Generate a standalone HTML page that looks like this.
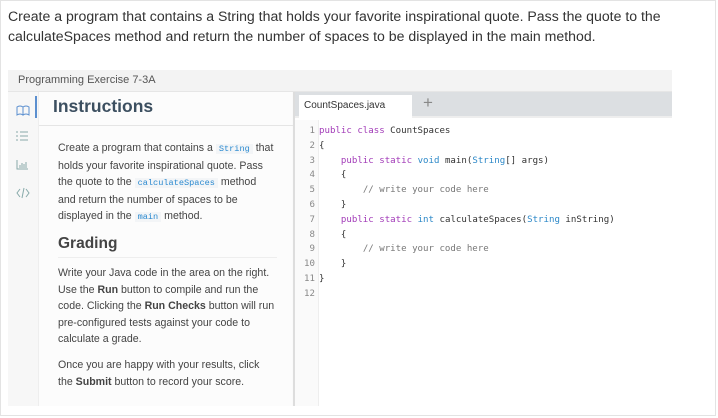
<!DOCTYPE html>
<html><head><style>
*{margin:0;padding:0;box-sizing:border-box}
body{width:718px;height:418px;background:#fff;font-family:"Liberation Sans",sans-serif;position:relative;overflow:hidden}
.frame{position:absolute;left:0;top:0;width:716px;height:416px;border:1px solid #e3e3e3}
.q{position:absolute;left:8px;top:6px;width:705px;font-size:14.1px;line-height:20px;color:#333}
.shot{position:absolute;left:8px;top:70px;width:664px;height:336px;background:#fafafa}
.hdr{position:absolute;left:0;top:0;width:664px;height:22px;background:#f3f3f3;font-size:11px;color:#555;padding:4px 0 0 10px;border-bottom:1px solid #e6e6e6}
.icons{position:absolute;left:0;top:22px;width:30px;height:314px;background:#f7f7f7}
.ins{position:absolute;left:30px;top:22px;width:254px;height:314px;background:#fcfcfc;border-left:1px solid #eee}
.ins h1{position:absolute;left:14px;top:4px;font-size:17.5px;color:#3c4f60;font-weight:bold}
.ins .ln{position:absolute;left:0;top:33px;width:254px;border-top:1px solid #e5e5e5}
.bar{position:absolute;left:-4px;top:4px;width:2px;height:22px;background:#5b8fcf}
.p{position:absolute;left:19px;font-size:10.6px;line-height:16.5px;color:#444;white-space:nowrap}
code{font-family:"Liberation Mono",monospace;font-size:8.6px;color:#2b8ad0;background:#f3f5f7;padding:0 3px}
.ins h2{position:absolute;left:19px;top:143px;font-size:15.5px;color:#444;font-weight:bold}
.ed{position:absolute;left:285px;top:22px;width:379px;height:314px;background:#fff;border-left:2px solid #ddd}
.tabs{position:absolute;left:0;top:0;width:377px;height:26px;background:#dcdfe2;border-bottom:2px solid #eee}
.tab{position:absolute;left:4px;top:3px;width:113px;height:23px;background:#fff;font-size:10px;color:#333;padding:5px 0 0 5px}
.plus{position:absolute;left:128px;top:1px;font-size:17px;color:#888}
.gut{position:absolute;left:0;top:28px;width:24px;height:286px;background:#fafafa;border-right:1px solid #eee}
.code{position:absolute;left:0;top:32px;font-family:"DejaVu Sans Mono","Liberation Mono",monospace;font-size:9.1px;line-height:14.8px;color:#333;white-space:pre}
.n{display:inline-block;width:20px;text-align:right;color:#888;margin-right:4px}
.k{color:#a23bb8}.t{color:#2c88c8}.c{color:#777}
</style></head><body>
<div class="frame"></div>
<div class="q">Create a program that contains a String that holds your favorite inspirational quote. Pass the quote to the calculateSpaces method and return the number of spaces to be displayed in the main method.</div>
<div class="shot">
<div class="hdr">Programming Exercise 7-3A</div>
<div class="icons">
<svg width="30" height="120" style="position:absolute;left:0;top:6px" fill="none" stroke="#5b8fcf" stroke-width="1">
<path d="M9 9 q3-2 6 0 v8 q-3-2-6 0z M15 9 q3-2 6 0 v8 q-3-2-6 0z"/>
<g stroke="#8aa"><path d="M12 34h8M12 38h8M12 42h8M8 34h2M8 38h2M8 42h2"/>
<path d="M9 62v9h11M12 70v-3M14 70v-5M16 70v-4M18 70v-6"/>
<path d="M12 91l-3 4 3 4M18 91l3 4-3 4M16 90l-2 10"/></g>
</svg>
</div>
<div class="ins">
<div class="bar"></div>
<h1>Instructions</h1><div class="ln"></div>
<div class="p" style="top:48px">Create a program that contains a <code>String</code> that<br>holds your favorite inspirational quote. Pass<br>the quote to the <code>calculateSpaces</code> method<br>and return the number of spaces to be<br>displayed in the <code>main</code> method.</div>
<h2>Grading</h2>
<div style="position:absolute;left:19px;top:165px;width:219px;border-top:1px solid #eee"></div>
<div class="p" style="top:173px">Write your Java code in the area on the right.<br>Use the <b>Run</b> button to compile and run the<br>code. Clicking the <b>Run Checks</b> button will run<br>pre-configured tests against your code to<br>calculate a grade.</div>
<div class="p" style="top:265px">Once you are happy with your results, click<br>the <b>Submit</b> button to record your score.</div>
</div>
<div class="ed">
<div class="tabs"><div class="tab">CountSpaces.java</div><div class="plus">+</div></div>
<div class="gut"></div>
<div class="code"><span class="n">1</span><span class="k">public class</span> CountSpaces
<span class="n">2</span>{
<span class="n">3</span>    <span class="k">public static</span> <span class="t">void</span> main(<span class="t">String</span>[] args)
<span class="n">4</span>    {
<span class="n">5</span>        <span class="c">// write your code here</span>
<span class="n">6</span>    }
<span class="n">7</span>    <span class="k">public static</span> <span class="t">int</span> calculateSpaces(<span class="t">String</span> inString)
<span class="n">8</span>    {
<span class="n">9</span>        <span class="c">// write your code here</span>
<span class="n">10</span>    }
<span class="n">11</span>}
<span class="n">12</span></div>
</div>
</div>
</body></html>
